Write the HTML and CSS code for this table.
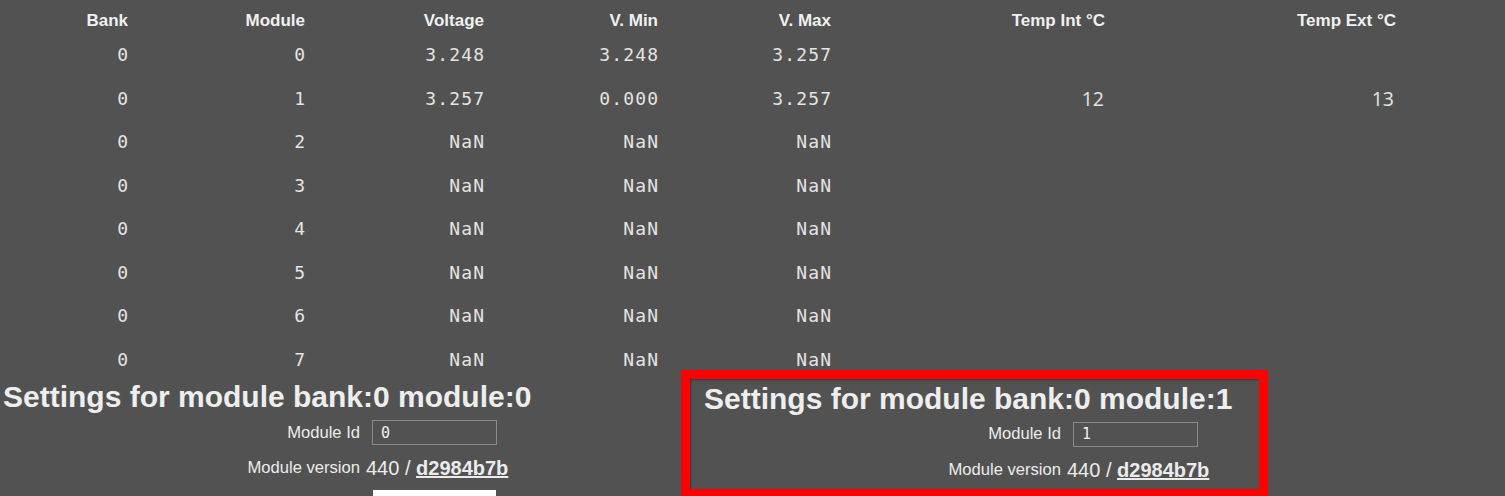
FILE: index.html
```html
<!DOCTYPE html>
<html lang="en">
<head>
<meta charset="utf-8">
<title>Modules</title>
<link rel="stylesheet" href="styles.css">
</head>
<body>
<table class="modules">
  <colgroup>
    <col class="c-bank"><col class="c-module"><col class="c-volt"><col class="c-vmin"><col class="c-vmax"><col class="c-tint"><col class="c-text">
  </colgroup>
  <thead>
    <tr><th>Bank</th><th>Module</th><th>Voltage</th><th>V. Min</th><th>V. Max</th><th>Temp Int °C</th><th>Temp Ext °C</th></tr>
  </thead>
  <tbody>
    <tr><td class="m"><span>0</span></td><td class="m"><span>0</span></td><td class="m"><span>3.248</span></td><td class="m"><span>3.248</span></td><td class="m"><span>3.257</span></td><td class="t"></td><td class="t"></td></tr>
    <tr><td class="m"><span>0</span></td><td class="m"><span>1</span></td><td class="m"><span>3.257</span></td><td class="m"><span>0.000</span></td><td class="m"><span>3.257</span></td><td class="t">12</td><td class="t t-ext">13</td></tr>
    <tr><td class="m"><span>0</span></td><td class="m"><span>2</span></td><td class="m"><span>NaN</span></td><td class="m"><span>NaN</span></td><td class="m"><span>NaN</span></td><td class="t"></td><td class="t"></td></tr>
    <tr><td class="m"><span>0</span></td><td class="m"><span>3</span></td><td class="m"><span>NaN</span></td><td class="m"><span>NaN</span></td><td class="m"><span>NaN</span></td><td class="t"></td><td class="t"></td></tr>
    <tr><td class="m"><span>0</span></td><td class="m"><span>4</span></td><td class="m"><span>NaN</span></td><td class="m"><span>NaN</span></td><td class="m"><span>NaN</span></td><td class="t"></td><td class="t"></td></tr>
    <tr><td class="m"><span>0</span></td><td class="m"><span>5</span></td><td class="m"><span>NaN</span></td><td class="m"><span>NaN</span></td><td class="m"><span>NaN</span></td><td class="t"></td><td class="t"></td></tr>
    <tr><td class="m"><span>0</span></td><td class="m"><span>6</span></td><td class="m"><span>NaN</span></td><td class="m"><span>NaN</span></td><td class="m"><span>NaN</span></td><td class="t"></td><td class="t"></td></tr>
    <tr><td class="m"><span>0</span></td><td class="m"><span>7</span></td><td class="m"><span>NaN</span></td><td class="m"><span>NaN</span></td><td class="m"><span>NaN</span></td><td class="t"></td><td class="t"></td></tr>
  </tbody>
</table>

<div class="settings-row">
  <section class="panel">
    <h2>Settings for module bank:0 module:0</h2>
    <div class="form">
      <label class="lbl" for="mid0">Module Id</label>
      <input class="inp" id="mid0" type="text" value="0">
      <span class="lbl">Module version</span>
      <span class="ver">440 / <a href="#">d2984b7b</a></span>
      <span class="lbl"></span>
      <button class="btn" type="button" aria-label="Save"></button>
    </div>
  </section>
  <section class="panel selected">
    <h2>Settings for module bank:0 module:1</h2>
    <div class="form">
      <label class="lbl" for="mid1">Module Id</label>
      <input class="inp" id="mid1" type="text" value="1">
      <span class="lbl">Module version</span>
      <span class="ver">440 / <a href="#">d2984b7b</a></span>
    </div>
  </section>
</div>
</body>
</html>
```

FILE: styles.css
```css
html, body {
  margin: 0;
  padding: 0;
  background: #525252;
  color: #ececec;
  font-family: "Liberation Sans", Arial, sans-serif;
  overflow: hidden;
}

.modules {
  border-collapse: collapse;
  table-layout: fixed;
  width: 1396px;
}
.c-bank { width: 128px; }
.c-module { width: 177px; }
.c-volt { width: 179px; }
.c-vmin { width: 174px; }
.c-vmax { width: 173px; }
.c-tint { width: 274px; }
.c-text { width: 291px; }

.modules th {
  font-size: 17px;
  font-weight: bold;
  line-height: 20px;
  text-align: right;
  padding: 10.5px 0 6px;
  color: #f0f0f0;
}
.modules td {
  text-align: right;
  vertical-align: top;
  padding: 8.6px 0 14.97px;
  line-height: 20px;
  height: 20px;
  color: #e4e4e4;
}
.modules tbody tr:last-child td {
  padding-bottom: 0;
}
.modules td.m {
  font-family: "DejaVu Sans Mono", monospace;
  font-size: 18px;
  letter-spacing: 1.16px;
}
.modules td.m span {
  margin-right: -1.16px;
}
.modules td.t {
  font-family: "Open Sans", sans-serif;
  font-size: 19.5px;
  padding-right: 1px;
}
.modules td.t-ext {
  padding-right: 2px;
}

.settings-row {
  display: flex;
  align-items: flex-start;
}
.panel {
  box-sizing: border-box;
  width: 681px;
  padding: 10px 0 0 3px;
}
.panel.selected {
  width: 587px;
  border: 9px solid #ff0000;
  padding: 2.5px 0 7.5px 14px;
  box-shadow: inset 1px 1px 2px rgba(0, 0, 0, 0.35);
}
.panel h2 {
  margin: 0;
  font-size: 30px;
  line-height: 34px;
  font-weight: bold;
  color: #eeeeee;
  white-space: nowrap;
}
.form {
  display: grid;
  grid-template-columns: 357px auto;
  justify-content: start;
  align-items: center;
  column-gap: 6px;
  row-gap: 11px;
  margin-top: 6px;
}
.lbl {
  font-size: 16.6px;
  text-align: right;
  color: #ececec;
}
.inp {
  box-sizing: border-box;
  width: 125px;
  height: 25px;
  margin: 0 0 0 6px;
  padding: 0 8px;
  border: 1px solid #8a8a8a;
  background: #525252;
  color: #f0f0f0;
  font-family: "DejaVu Sans Mono", monospace;
  font-size: 15px;
  outline: none;
}
.ver {
  font-size: 20px;
  line-height: 24px;
  color: #ececec;
  white-space: nowrap;
}
.ver a {
  color: #ececec;
  font-weight: bold;
  text-decoration: underline;
}
.btn {
  box-sizing: border-box;
  width: 123px;
  height: 32px;
  margin: -1px 0 0 7px;
  border: none;
  background: #ffffff;
  padding: 0;
}
```
